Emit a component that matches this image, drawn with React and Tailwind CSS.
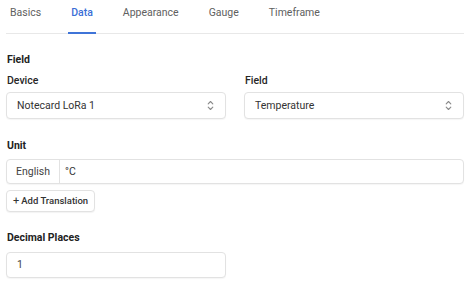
import React from "react";

function UpDown() {
  return (
    <svg width="7" height="11" viewBox="0 0 7 11" fill="none" stroke="#8a8a8a" strokeWidth="1.1" strokeLinecap="round" strokeLinejoin="round">
      <path d="M1.2 3.8 L3.5 1.5 L5.8 3.8" />
      <path d="M1.2 7.2 L3.5 9.5 L5.8 7.2" />
    </svg>
  );
}

function Select({ value }) {
  return (
    <div className="flex h-[27px] items-center justify-between rounded-[4px] border border-[#e2e2e2] bg-white pl-[10px] pr-[11px] shadow-[0_1px_1px_rgba(0,0,0,0.04)]">
      <span className="text-[10.5px] leading-[14px] text-[#333]">{value}</span>
      <UpDown />
    </div>
  );
}

export default function App() {
  const tabs = ["Basics", "Data", "Appearance", "Gauge", "Timeframe"];
  return (
    <div className="h-[283px] w-[474px] overflow-hidden bg-white px-[6px] pr-[10px]" style={{ fontFamily: "Roboto, 'Noto Sans', sans-serif" }}>
      <div className="flex gap-[24px] border-b border-[#e8e8e8] pl-[1px]">
        {tabs.map((t) => (
          <div
            key={t}
            className={
              t === "Data"
                ? "-mb-px border-b-2 border-[#3f74d8] px-[3px] pb-[12px] pt-[6px] text-[10.5px] font-medium leading-[14px] text-[#3a6ed6]"
                : "-mb-px border-b-2 border-transparent px-[3px] pb-[12px] pt-[6px] text-[10.5px] leading-[14px] text-[#606060]"
            }
          >
            {t}
          </div>
        ))}
      </div>

      <div className="mt-[19px] pl-[1px] text-[10.5px] font-bold leading-[14px] text-[#222]">Field</div>

      <div className="mt-[7px] grid grid-cols-2 gap-x-[18px]">
        <div className="flex flex-col">
          <div className="mb-[4px] pl-[1px] text-[10.5px] font-medium leading-[14px] text-[#262626]">Device</div>
          <Select value="Notecard LoRa 1" />
        </div>
        <div className="flex flex-col">
          <div className="mb-[4px] pl-[1px] text-[10.5px] font-medium leading-[14px] text-[#262626]">Field</div>
          <Select value="Temperature" />
        </div>
      </div>

      <div className="mt-[20px] pl-[1px] text-[10.5px] font-bold leading-[14px] text-[#222]">Unit</div>
      <div className="mt-[6px] flex h-[25px] items-stretch rounded-[4px] border border-[#e2e2e2] bg-white shadow-[0_1px_1px_rgba(0,0,0,0.04)]">
        <div className="flex w-[53px] items-center justify-center border-r border-[#e2e2e2] text-[10.5px] leading-[14px] text-[#444]">English</div>
        <div className="flex items-center pl-[5px] text-[10.5px] leading-[14px] text-[#333]">°C</div>
      </div>
      <div className="mt-[6px] flex">
        <div className="flex h-[22px] items-center gap-[2px] rounded-[4px] border border-[#e2e2e2] bg-white px-[6px] shadow-[0_1px_1px_rgba(0,0,0,0.05)]">
          <span className="text-[11px] leading-[14px] text-[#333]">+</span>
          <span className="text-[9.5px] font-medium leading-[14px] text-[#333]">Add Translation</span>
        </div>
      </div>

      <div className="mt-[19px] pl-[1px] text-[10.5px] font-bold leading-[14px] text-[#222]">Decimal Places</div>
      <div className="mt-[7px] grid grid-cols-2 gap-x-[18px]">
        <div className="flex h-[26px] items-center rounded-[4px] border border-[#e2e2e2] bg-white pl-[10px] text-[10.5px] leading-[14px] text-[#444] shadow-[0_1px_1px_rgba(0,0,0,0.04)]">1</div>
      </div>
    </div>
  );
}
